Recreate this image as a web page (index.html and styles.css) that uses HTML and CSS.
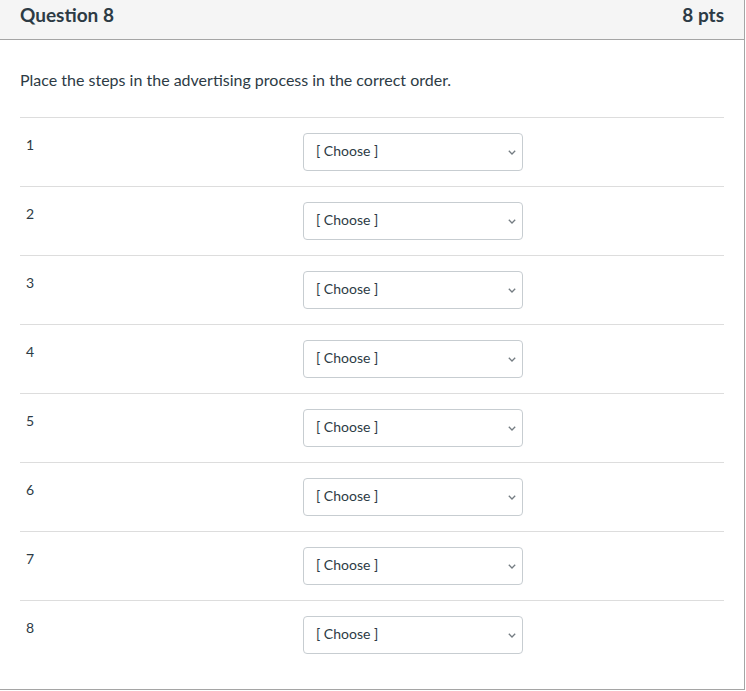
FILE: index.html
```html
<!DOCTYPE html>
<html lang="en">
<head>
<meta charset="utf-8">
<title>Question 8</title>
<link rel="stylesheet" href="styles.css">
</head>
<body>
<div class="question">
  <div class="header">
    <span class="title">Question 8</span>
    <span class="points">8 pts</span>
  </div>
  <div class="content">
    <p class="prompt">Place the steps in the advertising process in the correct order.</p>
    <div class="rows">
      <div class="row"><div class="num">1</div><div class="select"><span>[ Choose ]</span><svg class="chev" viewBox="0 0 8 5" width="8" height="5"><path d="M0.8 0.8 L4 4 L7.2 0.8" fill="none" stroke="#747c82" stroke-width="1.3"/></svg></div></div>
      <div class="row"><div class="num">2</div><div class="select"><span>[ Choose ]</span><svg class="chev" viewBox="0 0 8 5" width="8" height="5"><path d="M0.8 0.8 L4 4 L7.2 0.8" fill="none" stroke="#747c82" stroke-width="1.3"/></svg></div></div>
      <div class="row"><div class="num">3</div><div class="select"><span>[ Choose ]</span><svg class="chev" viewBox="0 0 8 5" width="8" height="5"><path d="M0.8 0.8 L4 4 L7.2 0.8" fill="none" stroke="#747c82" stroke-width="1.3"/></svg></div></div>
      <div class="row"><div class="num">4</div><div class="select"><span>[ Choose ]</span><svg class="chev" viewBox="0 0 8 5" width="8" height="5"><path d="M0.8 0.8 L4 4 L7.2 0.8" fill="none" stroke="#747c82" stroke-width="1.3"/></svg></div></div>
      <div class="row"><div class="num">5</div><div class="select"><span>[ Choose ]</span><svg class="chev" viewBox="0 0 8 5" width="8" height="5"><path d="M0.8 0.8 L4 4 L7.2 0.8" fill="none" stroke="#747c82" stroke-width="1.3"/></svg></div></div>
      <div class="row"><div class="num">6</div><div class="select"><span>[ Choose ]</span><svg class="chev" viewBox="0 0 8 5" width="8" height="5"><path d="M0.8 0.8 L4 4 L7.2 0.8" fill="none" stroke="#747c82" stroke-width="1.3"/></svg></div></div>
      <div class="row"><div class="num">7</div><div class="select"><span>[ Choose ]</span><svg class="chev" viewBox="0 0 8 5" width="8" height="5"><path d="M0.8 0.8 L4 4 L7.2 0.8" fill="none" stroke="#747c82" stroke-width="1.3"/></svg></div></div>
      <div class="row"><div class="num">8</div><div class="select"><span>[ Choose ]</span><svg class="chev" viewBox="0 0 8 5" width="8" height="5"><path d="M0.8 0.8 L4 4 L7.2 0.8" fill="none" stroke="#747c82" stroke-width="1.3"/></svg></div></div>
    </div>
  </div>
</div>
</body>
</html>
```
FILE: styles.css
```css
html, body {
  margin: 0;
  padding: 0;
  background: #ffffff;
}
body {
  font-family: Lato, "Noto Sans", sans-serif;
  color: #2d3b45;
}
.question {
  width: 746px;
  height: 691px;
  box-sizing: border-box;
  margin: -1px 0 0 -1px;
  border: 1px solid #a5a5a5;
  display: flex;
  flex-direction: column;
  overflow: hidden;
}
.header {
  flex-shrink: 0;
  height: 40px;
  box-sizing: border-box;
  background: #f5f5f5;
  border-bottom: 1px solid #a5a5a5;
  display: flex;
  justify-content: space-between;
  align-items: flex-start;
  padding: 3px 20px 0 20px;
  font-weight: 700;
  font-size: 19px;
  line-height: 24px;
}
.content {
  flex-shrink: 0;
  padding: 0 20px;
}
.prompt {
  margin: 30px 0 27px 0;
  font-size: 16px;
  line-height: 20px;
}
.row {
  border-top: 1px solid #dddddd;
  display: flex;
  height: 69px;
  box-sizing: border-box;
  padding: 15px 0;
}
.num {
  width: 283px;
  box-sizing: border-box;
  flex-shrink: 0;
  padding: 2px 0 0 6px;
  font-size: 14px;
  line-height: 20px;
}
.select {
  width: 220px;
  height: 38px;
  box-sizing: border-box;
  border: 1px solid #c7cdd1;
  border-radius: 4px;
  display: flex;
  align-items: center;
  justify-content: space-between;
  padding: 0 6px 3px 12px;
  font-size: 14px;
  background: #ffffff;
}
.chev {
  display: block;
  margin-top: 3px;
}
```
